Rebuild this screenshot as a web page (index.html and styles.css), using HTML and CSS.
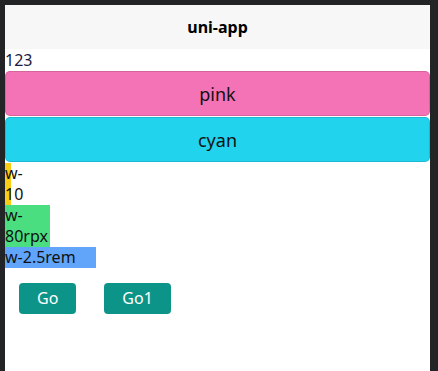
FILE: index.html
```html
<!DOCTYPE html>
<html lang="zh-CN">
<head>
    <meta charset="UTF-8">
    <meta name="viewport" content="width=device-width, initial-scale=1.0">
    <title>uni-app</title>
    <link rel="stylesheet" href="styles.css">
</head>
<body>
    <div class="frame">
        <div class="navbar">uni-app</div>
        <div class="page">
            <div class="txt">123</div>
            <button class="uni-btn bg-pink">pink</button>
            <button class="uni-btn bg-cyan">cyan</button>
            <div class="w-10 bg-yellow">w-10</div>
            <div class="w-80rpx bg-green">w-80rpx</div>
            <div class="w-rem bg-blue">w-2.5rem</div>
            <div class="links">
                <a class="go-btn">Go</a>
                <a class="go-btn">Go1</a>
            </div>
        </div>
    </div>
</body>
</html>
```

FILE: styles.css
```css
html,body{
    margin: 0;
    height: 100%;
}
body{
    background: #232426;
    font-family: "Noto Sans", "Noto Sans CJK SC", sans-serif;
    font-size: 16px;
    color: #111;
}
.frame{
    margin: 5px 8px 0 5px;
    height: calc(100% - 5px);
    background: #fff;
}
.navbar{
    height: 44px;
    line-height: 44px;
    background: #f7f7f7;
    text-align: center;
    font-weight: bold;
    font-size: 16px;
    color: #000;
}
.page{
    line-height: 21px;
}
.txt{
    color: #1a1a40;
    padding-top: 1px;
}
.uni-btn{
    display: block;
    width: 100%;
    height: 45px;
    margin: 0 0 1px;
    padding: 0;
    border: 1px solid rgba(0,0,0,.12);
    border-radius: 5px;
    font-family: inherit;
    font-size: 18px;
    color: #111;
}
.bg-pink{
    background: #f472b6;
}
.bg-cyan{
    background: #22d3ee;
}
.bg-yellow{
    background: #facc15;
}
.bg-green{
    background: #4ade80;
}
.bg-blue{
    background: #60a5fa;
}
.w-10{
    width: 6px;
}
.w-80rpx{
    width: 45px;
}
.w-rem{
    width: 91px;
    white-space: nowrap;
}
.links{
    display: flex;
    gap: 28px;
    padding: 15px 14px;
}
.go-btn{
    display: inline-block;
    height: 31px;
    line-height: 31px;
    padding: 0 18px;
    background: #0d9488;
    color: #fff;
    border-radius: 4px;
}
```
